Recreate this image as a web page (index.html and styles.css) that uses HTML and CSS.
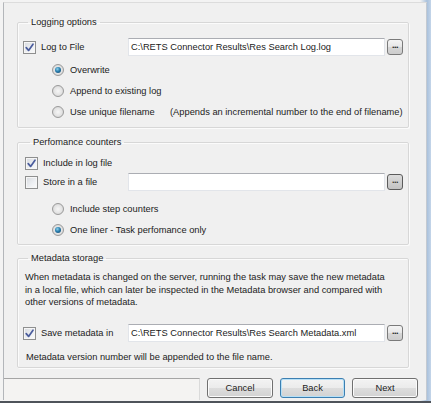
FILE: index.html
```html
<!DOCTYPE html>
<html>
<head>
<meta charset="utf-8">
<link rel="stylesheet" href="styles.css">
</head>
<body>
<div class="frame">
  <fieldset class="group g1">
    <legend>Logging options</legend>
    <div class="row">
      <label class="chk"><span class="cb checked"><svg viewBox="0 0 11 11" width="11" height="11"><path d="M2.2 5.6 L4.6 8.4 L9 2.2" /></svg></span><span>Log to File</span></label>
      <div class="input">C:\RETS Connector Results\Res Search Log.log</div>
      <button class="dots">...</button>
    </div>
    <div class="radios">
      <div class="radio"><span class="rb on"></span><span>Overwrite</span></div>
      <div class="radio"><span class="rb"></span><span>Append to existing log</span></div>
      <div class="radio"><span class="rb"></span><span class="rlabel">Use unique filename</span><span>(Appends an incremental number to the end of filename)</span></div>
    </div>
  </fieldset>

  <fieldset class="group g2">
    <legend>Perfomance counters</legend>
    <div class="row">
      <label class="chk"><span class="cb checked"><svg viewBox="0 0 11 11" width="11" height="11"><path d="M2.2 5.6 L4.6 8.4 L9 2.2" /></svg></span><span>Include in log file</span></label>
    </div>
    <div class="row r2">
      <label class="chk"><span class="cb"></span><span>Store in a file</span></label>
      <div class="input"></div>
      <button class="dots dark">...</button>
    </div>
    <div class="radios r2gap">
      <div class="radio"><span class="rb"></span><span>Include step counters</span></div>
      <div class="radio"><span class="rb on"></span><span>One liner - Task perfomance only</span></div>
    </div>
  </fieldset>

  <fieldset class="group g3">
    <legend>Metadata storage</legend>
    <p class="para">When metadata is changed on the server, running the task may save the new metadata in a local file, which can later be inspected in the Metadata browser and compared with other versions of metadata.</p>
    <div class="row r3">
      <label class="chk"><span class="cb checked"><svg viewBox="0 0 11 11" width="11" height="11"><path d="M2.2 5.6 L4.6 8.4 L9 2.2" /></svg></span><span>Save metadata in</span></label>
      <div class="input">C:\RETS Connector Results\Res Search Metadata.xml</div>
      <button class="dots">...</button>
    </div>
    <p class="note">Metadata version number will be appended to the file name.</p>
  </fieldset>

  <div class="bottom">
    <div class="status"></div>
    <button class="btn">Cancel</button>
    <button class="btn focus">Back</button>
    <button class="btn">Next</button>
  </div>
</div>
</body>
</html>
```
FILE: styles.css
```css
* { box-sizing: border-box; }
html, body { margin: 0; padding: 0; }
body {
  width: 431px;
  height: 403px;
  overflow: hidden;
  font-family: "Liberation Sans", Arial, sans-serif;
  font-size: 9.3px;
  color: #222;
  background:
    linear-gradient(to top, #4e535a 0, #4e535a 2px, transparent 2px),
    linear-gradient(to right, #f3f3f3 0, #f3f3f3 420px, #a9c1dc 427px, #c4d5e9 431px);
}
.frame {
  margin: 2px 4px 0 3px;
  height: 398px;
  border-left: 1px solid #b3b6ba;
  border-top: 1px solid #dcdcdc;
  border-right: 1px solid #c3c9d1;
  background: #f0f0f0;
  display: flex;
  flex-direction: column;
}
.group {
  margin: 0 17px 0 13px;
  padding: 0;
  border: 1px solid #d7d7d7;
  box-shadow: inset 1px 1px 0 #fbfbfb, 1px 1px 0 #fbfbfb;
  border-radius: 2px;
  min-inline-size: 0;
}
.group legend {
  margin-left: 5px;
  padding: 0 3px;
  line-height: 12px;
  height: 12px;
}
.g1 { margin-top: 13px; padding: 10px 5px 5px 5px; }
.g2 { margin-top: 8px; padding: 6px 5px 4px 7px; }
.g3 { margin-top: 7px; padding: 7px 5px 4px 5px; }

.row {
  display: flex;
  align-items: center;
  height: 18px;
}
.r2 { margin-top: 1px; }
.r3 { margin-top: 15.5px; }
.g2 .chk { width: 103px; }
.chk {
  display: flex;
  align-items: center;
  width: 105px;
  flex: none;
}
.cb {
  width: 13px;
  height: 13px;
  flex: none;
  margin-right: 5px;
  border: 1px solid #8e8f8f;
  background: linear-gradient(135deg, #d6d9de 0%, #eef0f3 60%, #fbfbfb 100%);
  box-shadow: inset 0 0 0 1px #f6f6f6;
  display: flex;
  align-items: center;
  justify-content: center;
}
.cb svg { display: block; }
.cb path { fill: none; stroke: #4a5c9c; stroke-width: 1.7; stroke-linecap: round; stroke-linejoin: round; }
.input {
  flex: 1;
  height: 18px;
  background: #fff;
  border: 1px solid #e2e5ea;
  border-top-color: #abadb3;
  padding: 0 2px;
  line-height: 16px;
  white-space: nowrap;
  overflow: hidden;
}
.dots {
  flex: none;
  width: 16px;
  height: 16px;
  margin-left: 2px;
  padding: 0;
  border: 1px solid #7a7a7a;
  border-radius: 3px;
  background: linear-gradient(#f4f4f4 0%, #e6e6e6 50%, #d6d6d6 51%, #cdcdcd 100%);
  font-family: "Liberation Sans", Arial, sans-serif;
  font-size: 9px;
  font-weight: bold;
  line-height: 18px;
  color: #1a1a1a;
  letter-spacing: -0.5px;
  display: flex;
  justify-content: center;
  align-items: flex-end;
}
.dots.dark { border-color: #5b5b5b; background: linear-gradient(#dcdcdc, #c2c2c2); color: #333; }
.radios { margin-top: 3px; }
.r2gap { margin-top: 7px; }
.radio {
  display: flex;
  align-items: center;
  height: 21px;
  padding-left: 29px;
}
.g2 .radio { padding-left: 27px; }
.rb {
  width: 12px;
  height: 12px;
  flex: none;
  margin-right: 6px;
  border-radius: 50%;
  border: 1px solid #9a9a9a;
  background: radial-gradient(circle at 50% 50%, #f6f6f6 0%, #e3e3e3 55%, #c9c9c9 100%);
  display: flex;
  align-items: center;
  justify-content: center;
}
.rb.on::after {
  content: "";
  width: 6px;
  height: 6px;
  border-radius: 50%;
  background: radial-gradient(circle at 40% 35%, #8fd3ee 0%, #2a7fae 45%, #0f3d63 100%);
}
.rlabel { width: 100px; flex: none; }
.para {
  margin: 0;
  padding-left: 2px;
  width: 364px;
  line-height: 12.5px;
}
.note {
  margin: 9px 0 0 0;
  padding-left: 3px;
  line-height: 12px;
}
.bottom {
  margin-top: 10px;
  display: flex;
  align-items: flex-start;
  height: 22px;
}
.status {
  width: 196px;
  height: 22px;
  flex: none;
  border-top: 1px solid #a5a5a5;
  border-right: 1px solid #dadada;
  background: #f4f3f2;
}
.btn {
  flex: none;
  width: 66px;
  height: 20px;
  margin-left: 7px;
  padding: 0;
  border: 1px solid #707070;
  border-radius: 3px;
  background: linear-gradient(#f3f3f3 0%, #ebebeb 50%, #dddddd 51%, #d2d2d2 100%);
  box-shadow: inset 0 0 0 1px #fbfbfb;
  font-family: "Liberation Sans", Arial, sans-serif;
  font-size: 9.3px;
  color: #1c1c1c;
}
.btn.focus {
  width: 65px;
  border-color: #3c7fb1;
  box-shadow: inset 0 0 0 1px #b6e0f7;
}
```
